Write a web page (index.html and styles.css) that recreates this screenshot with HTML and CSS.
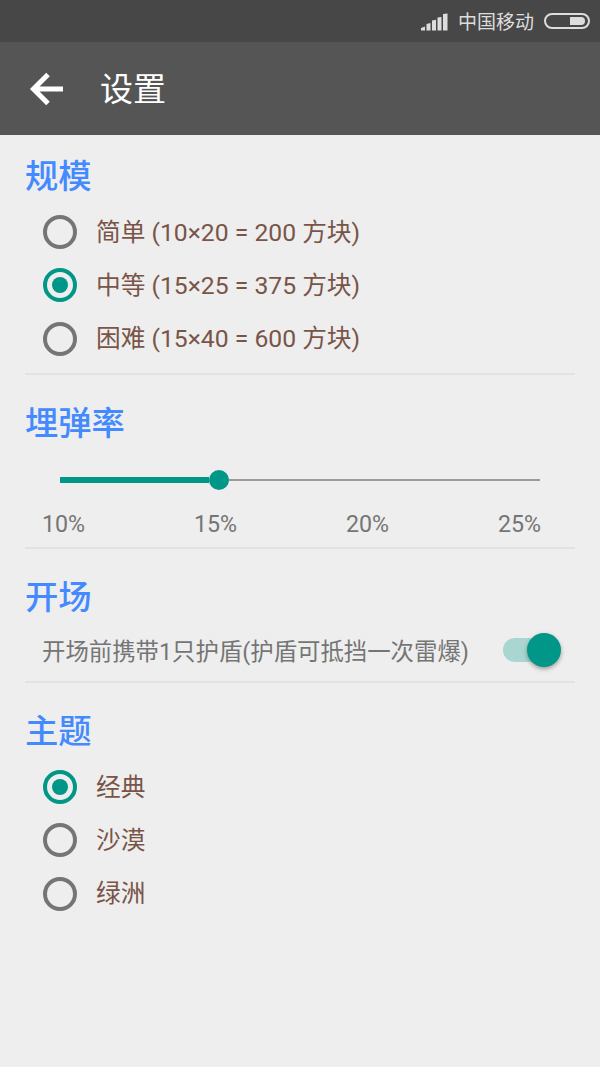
FILE: index.html
```html
<!DOCTYPE html>
<html lang="zh-CN">
  <head>
    <meta charset="UTF-8" />
    <title>设置</title>
    <link rel="stylesheet" href="styles.css">
  </head>
  <body>
    <div class="statusbar">
      <svg class="signal" width="27" height="18" viewBox="0 0 27 18">
        <path d="M0 17.500V15l4-1.500v4zM5.500 17.500v-6.500l4-1v7.500zM11 17.500V7.500l4-.7v10.700zM16.500 17.500V4.500l4-.6v13.600zM22 17.500V1l4.500-.5v17z" fill="#dddddd"/>
      </svg>
      <span class="carrier">中国移动</span>
      <div class="battery"><div class="battery-level"></div></div>
    </div>
    <header class="appbar">
      <svg class="back" width="36" height="36" viewBox="0 0 36 36">
        <path d="M34 18H6M19 3.500L4.500 18 19 32.500" fill="none" stroke="#fff" stroke-width="5"/>
      </svg>
      <h1>设置</h1>
    </header>
    <main>
      <section class="group">
        <h2>规模</h2>
        <div class="radio"><span class="dot"></span><span class="label">简单 (10×20 = 200 方块)</span></div>
        <div class="radio on"><span class="dot"></span><span class="label">中等 (15×25 = 375 方块)</span></div>
        <div class="radio"><span class="dot"></span><span class="label">困难 (15×40 = 600 方块)</span></div>
      </section>
      <section class="group">
        <h2>埋弹率</h2>
        <div class="slider">
          <div class="slider-fill"></div>
          <div class="slider-thumb"></div>
          <div class="slider-rest"></div>
        </div>
        <div class="ticks">
          <span>10%</span>
          <span>15%</span>
          <span>20%</span>
          <span>25%</span>
        </div>
      </section>
      <section class="group">
        <h2>开场</h2>
        <div class="toggle-row">
          <span>开场前携带1只护盾(护盾可抵挡一次雷爆)</span>
          <div class="switch"><div class="switch-thumb"></div></div>
        </div>
      </section>
      <section class="group last">
        <h2>主题</h2>
        <div class="radio on"><span class="dot"></span><span class="label">经典</span></div>
        <div class="radio"><span class="dot"></span><span class="label">沙漠</span></div>
        <div class="radio"><span class="dot"></span><span class="label">绿洲</span></div>
      </section>
    </main>
  </body>
</html>
```

FILE: styles.css
```css
body {
  margin: 0;
  background-color: #eeeeee;
  font-family: "Roboto", "Noto Sans CJK SC", sans-serif;
}
.statusbar {
  height: 42px;
  background-color: #474747;
  display: flex;
  align-items: center;
  justify-content: flex-end;
  padding-right: 10px;
  box-sizing: border-box;
}
.signal {
  margin-right: 10px;
  margin-top: 1px;
}
.carrier {
  color: #dddddd;
  font-size: 19px;
  margin: -2px 10px 0 0;
}
.battery {
  width: 46px;
  height: 16px;
  box-sizing: border-box;
  border: 2px solid #dddddd;
  border-radius: 8px;
  padding: 2px 3px;
  display: flex;
  justify-content: flex-end;
}
.battery-level {
  width: 15px;
  background-color: #dddddd;
  border-radius: 0 4px 4px 0;
}
.appbar {
  height: 93px;
  background-color: #555555;
  display: flex;
  align-items: center;
  padding-left: 29px;
}
.back {
  margin-right: 35px;
}
.appbar h1 {
  margin: -4px 0 0;
  color: #ffffff;
  font-size: 33px;
  font-weight: 400;
}
main {
  padding: 0 25px;
}
.group {
  padding: 14px 0 8px;
  border-bottom: 2px solid #e2e2e2;
  margin-bottom: 7px;
}
.group.last {
  border-bottom: none;
}
.group h2 {
  margin: 0 0 2.500px;
  height: 54px;
  line-height: 56px;
  color: #448aff;
  font-size: 33.300px;
  font-weight: 500;
}
.radio {
  height: 53.300px;
  display: flex;
  align-items: center;
  padding-left: 18px;
  color: #795548;
  font-size: 24.700px;
}
.label {
  padding-bottom: 5px;
}
.dot {
  width: 34px;
  height: 34px;
  box-sizing: border-box;
  border: 4px solid #757575;
  border-radius: 50%;
  margin-right: 19px;
  padding: 5px;
}
.radio.on .dot {
  border-color: #009688;
}
.radio.on .dot::after {
  content: "";
  display: block;
  width: 16px;
  height: 16px;
  border-radius: 50%;
  background-color: #009688;
}
.slider {
  display: flex;
  align-items: center;
  height: 22px;
  margin: 18.500px 35px 0;
}
.slider-fill {
  width: 149px;
  height: 6px;
  background-color: #009688;
}
.slider-thumb {
  width: 20px;
  height: 20px;
  border-radius: 50%;
  background-color: #009688;
}
.slider-rest {
  flex: 1;
  height: 2px;
  background-color: #9a9a9a;
}
.ticks {
  display: flex;
  justify-content: space-between;
  padding: 0 34px 0 17px;
  margin-top: 20px;
  height: 28px;
  line-height: 26px;
  color: #757575;
  font-size: 23.200px;
}
.toggle-row {
  display: flex;
  align-items: center;
  justify-content: space-between;
  height: 46.500px;
  padding: 0 24px 0 17px;
  color: #757575;
  font-size: 23.400px;
}
.switch {
  position: relative;
  width: 48px;
  height: 24px;
  border-radius: 12px;
  background-color: #a9d6d1;
}
.switch-thumb {
  position: absolute;
  top: -5px;
  right: -10px;
  width: 34px;
  height: 34px;
  border-radius: 50%;
  background-color: #009688;
  box-shadow: 0 2px 4px rgba(0, 0, 0, 0.35);
}
```
